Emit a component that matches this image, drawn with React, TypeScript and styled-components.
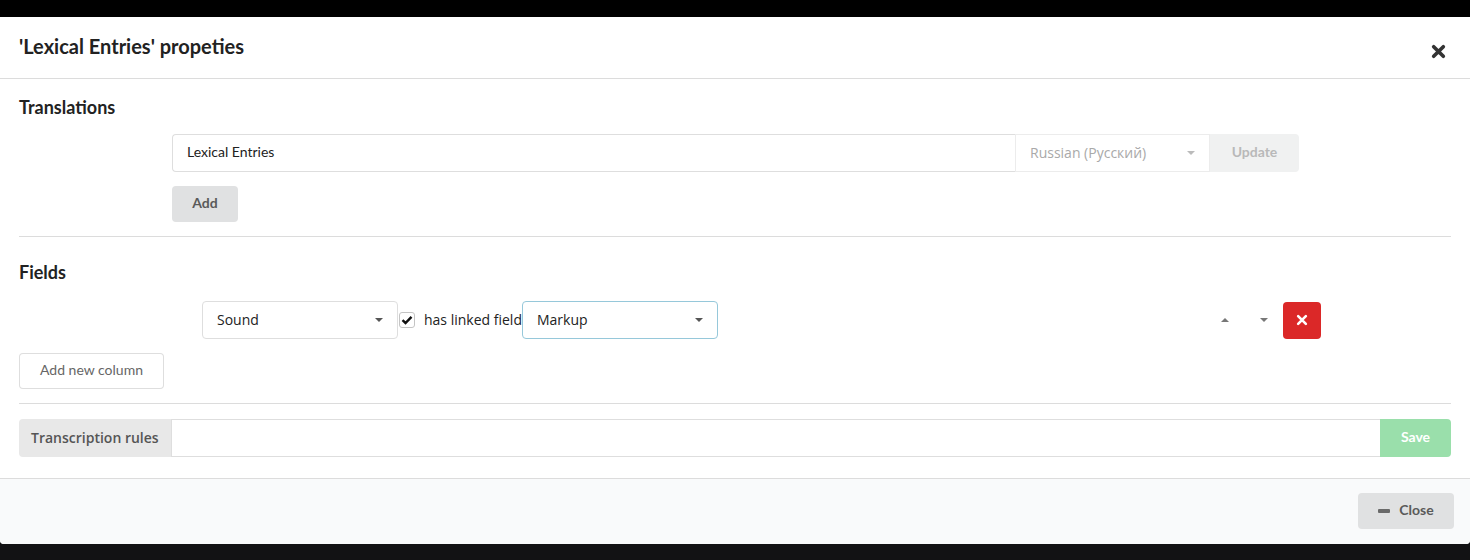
import styled, { createGlobalStyle } from "styled-components";

const GlobalStyle = createGlobalStyle`
  html, body {
    margin: 0;
    padding: 0;
    background: #0c0c0e;
  }
  * { box-sizing: border-box; }
`;

const Page = styled.div`
  width: 1470px;
  height: 560px;
  padding-top: 17px;
  background: linear-gradient(#000 0, #000 17px, #121214 17px);
  font-family: Lato, "Open Sans", sans-serif;
  overflow: hidden;
`;

const Modal = styled.div`
  background: #fff;
  border-radius: 0 0 4px 4px;
  display: flex;
  flex-direction: column;
`;

const Header = styled.div`
  height: 62px;
  padding: 0 24px 0 19px;
  display: flex;
  align-items: center;
  justify-content: space-between;
  border-bottom: 1px solid #dcdcdc;
`;

const Title = styled.div`
  font-size: 20px;
  font-weight: 700;
  color: #222;
  margin-top: -4px;
`;

const CloseX = styled.button`
  border: 0;
  background: none;
  padding: 0;
  margin-top: 8px;
  width: 16px;
  height: 16px;
  display: flex;
  align-items: center;
  justify-content: center;
  cursor: pointer;
`;

const Content = styled.div`
  padding: 17px 19px 21px;
  border-bottom: 1px solid #dcdcdc;
`;

const Heading = styled.h3`
  margin: 0;
  font-size: 18px;
  font-weight: 700;
  line-height: 23px;
  color: #222;
`;

const Indented = styled.div<{ $indent: number }>`
  margin-left: ${(p) => p.$indent}px;
`;

const TranslationRow = styled.div`
  display: flex;
  height: 38px;
  width: 1127px;
  margin-top: 15px;
`;

const TextInput = styled.div`
  flex: 1;
  display: flex;
  align-items: center;
  padding: 0 14px 3px;
  border: 1px solid #dedede;
  border-right: 0;
  border-radius: 4px 0 0 4px;
  font-size: 14px;
  color: #222;
`;

const Select = styled.div<{ $width: number; $focused?: boolean; $disabled?: boolean }>`
  width: ${(p) => p.$width}px;
  height: 38px;
  display: flex;
  align-items: center;
  justify-content: space-between;
  padding: 0 14px 1px;
  border: 1px solid ${(p) => (p.$focused ? "#96c8da" : p.$disabled ? "#ececec" : "#dedede")};
  border-radius: ${(p) => (p.$disabled ? "0" : "4px")};
  font-family: "Open Sans", sans-serif;
  font-size: 14px;
  color: ${(p) => (p.$disabled ? "#a9a9a9" : "#222")};
  background: #fff;
  flex-shrink: 0;
`;

const Caret = styled.span<{ $up?: boolean; $color?: string }>`
  width: 0;
  height: 0;
  border-left: 4.5px solid transparent;
  border-right: 4.5px solid transparent;
  ${(p) =>
    p.$up
      ? `border-bottom: 4.5px solid ${p.$color || "#555"};`
      : `border-top: 4.5px solid ${p.$color || "#555"};`}
`;

const Button = styled.button<{ $variant?: "grey" | "basic" | "disabled" | "green" | "red" | "ghost"; $width?: number; $height?: number }>`
  height: ${(p) => p.$height || 36}px;
  ${(p) => (p.$width ? `width: ${p.$width}px;` : "")}
  padding: 0 0 3px;
  border: 0;
  border-radius: 4px;
  font-family: Lato, sans-serif;
  font-size: 14px;
  font-weight: ${(p) => (p.$variant === "basic" ? 400 : 700)};
  display: flex;
  align-items: center;
  justify-content: center;
  gap: 9px;
  flex-shrink: 0;
  cursor: pointer;
  ${(p) => {
    switch (p.$variant) {
      case "basic":
        return "background: #fff; color: #666; box-shadow: inset 0 0 0 1px #dedede;";
      case "disabled":
        return "background: #f0f1f1; color: #b9b9b9; border-radius: 0 4px 4px 0;";
      case "green":
        return "background: #9adfab; color: #fff; border-radius: 0 4px 4px 0;";
      case "red":
        return "background: #db2828; color: #fff; padding: 0;";
      case "ghost":
        return "background: #fff; padding: 0;";
      default:
        return "background: #e0e1e2; color: #5a5a5a;";
    }
  }}
`;

const AddWrap = styled.div`
  margin-top: 14px;
  width: 66px;
`;

const Divider = styled.div`
  height: 1px;
  background: #dcdcdc;
  margin: 14px 0 24px;
`;

const FieldRow = styled.div`
  display: flex;
  align-items: center;
  margin: 17px 0 0 183px;
  width: 1119px;
`;

const Check = styled.span`
  width: 16px;
  height: 16px;
  margin-left: 1px;
  border: 1px solid #c4c4c4;
  border-radius: 3px;
  display: flex;
  align-items: center;
  justify-content: center;
`;

const CheckLabel = styled.span`
  margin-left: 9px;
  padding-bottom: 1px;
  font-family: "Open Sans", sans-serif;
  font-size: 14px;
  color: #222;
  white-space: nowrap;
`;

const Controls = styled.div`
  margin-left: auto;
  display: flex;
  align-items: center;
`;

const ColumnWrap = styled.div`
  margin-top: 14px;
  width: 145px;
`;

const RulesDivider = styled.div`
  height: 1px;
  background: #dcdcdc;
  margin: 14px 0 15px;
`;

const LabeledInput = styled.div`
  display: flex;
  height: 38px;
`;

const InputLabel = styled.div`
  width: 152px;
  display: flex;
  align-items: center;
  padding: 0 0 2px 12px;
  background: #e8e8e8;
  border-radius: 4px 0 0 4px;
  font-family: "Open Sans", sans-serif;
  font-size: 14px;
  font-weight: 600;
  color: #555;
  white-space: nowrap;
`;

const PlainInput = styled.div`
  flex: 1;
  border: 1px solid #dedede;
  border-right: 0;
`;

const Footer = styled.div`
  background: #f9fafb;
  height: 65px;
  padding: 14px 16px 0;
  display: flex;
  justify-content: flex-end;
  border-radius: 0 0 4px 4px;
`;

const Minus = styled.span`
  width: 12px;
  height: 4px;
  margin-top: 2px;
  background: #6a6a6a;
  border-radius: 1px;
`;

function XIcon({ size, color, stroke }: { size: number; color: string; stroke: number }) {
  return (
    <svg width={size} height={size} viewBox="0 0 14 14">
      <path d="M2.5 2.5 L11.5 11.5 M11.5 2.5 L2.5 11.5" stroke={color} strokeWidth={stroke} strokeLinecap="round" />
    </svg>
  );
}

function CheckIcon() {
  return (
    <svg width="12" height="10" viewBox="0 0 12 10">
      <path d="M1.5 5.2 L4.5 8 L10.5 1.8" stroke="#111" strokeWidth="2.4" fill="none" strokeLinejoin="miter" />
    </svg>
  );
}

export default function App() {
  return (
    <Page>
      <GlobalStyle />
      <Modal>
        <Header>
          <Title>'Lexical Entries' propeties</Title>
          <CloseX>
            <XIcon size={15} color="#333" stroke={3.4} />
          </CloseX>
        </Header>

        <Content>
          <Heading>Translations</Heading>
          <Indented $indent={153}>
            <TranslationRow>
              <TextInput>Lexical Entries</TextInput>
              <Select $width={195} $disabled>
                Russian (Русский)
                <Caret $color="#bbb" />
              </Select>
              <Button $variant="disabled" $width={89} $height={38}>
                Update
              </Button>
            </TranslationRow>
            <AddWrap>
              <Button $width={66}>Add</Button>
            </AddWrap>
          </Indented>

          <Divider />

          <Heading>Fields</Heading>
          <FieldRow>
            <Select $width={196}>
              Sound
              <Caret />
            </Select>
            <Check>
              <CheckIcon />
            </Check>
            <CheckLabel>has linked field</CheckLabel>
            <Select $width={196} $focused>
              Markup
              <Caret />
            </Select>
            <Controls>
              <Button $variant="ghost" $width={39} $height={37}>
                <Caret $up $color="#777" />
              </Button>
              <Button $variant="ghost" $width={39} $height={37}>
                <Caret $color="#777" />
              </Button>
              <Button $variant="red" $width={38} $height={37}>
                <XIcon size={12} color="#fff" stroke={3} />
              </Button>
            </Controls>
          </FieldRow>
          <ColumnWrap>
            <Button $variant="basic" $width={145}>
              Add new column
            </Button>
          </ColumnWrap>

          <RulesDivider />

          <LabeledInput>
            <InputLabel>Transcription rules</InputLabel>
            <PlainInput />
            <Button $variant="green" $width={71} $height={38}>
              Save
            </Button>
          </LabeledInput>
        </Content>

        <Footer>
          <Button $width={96}>
            <Minus />
            Close
          </Button>
        </Footer>
      </Modal>
    </Page>
  );
}
